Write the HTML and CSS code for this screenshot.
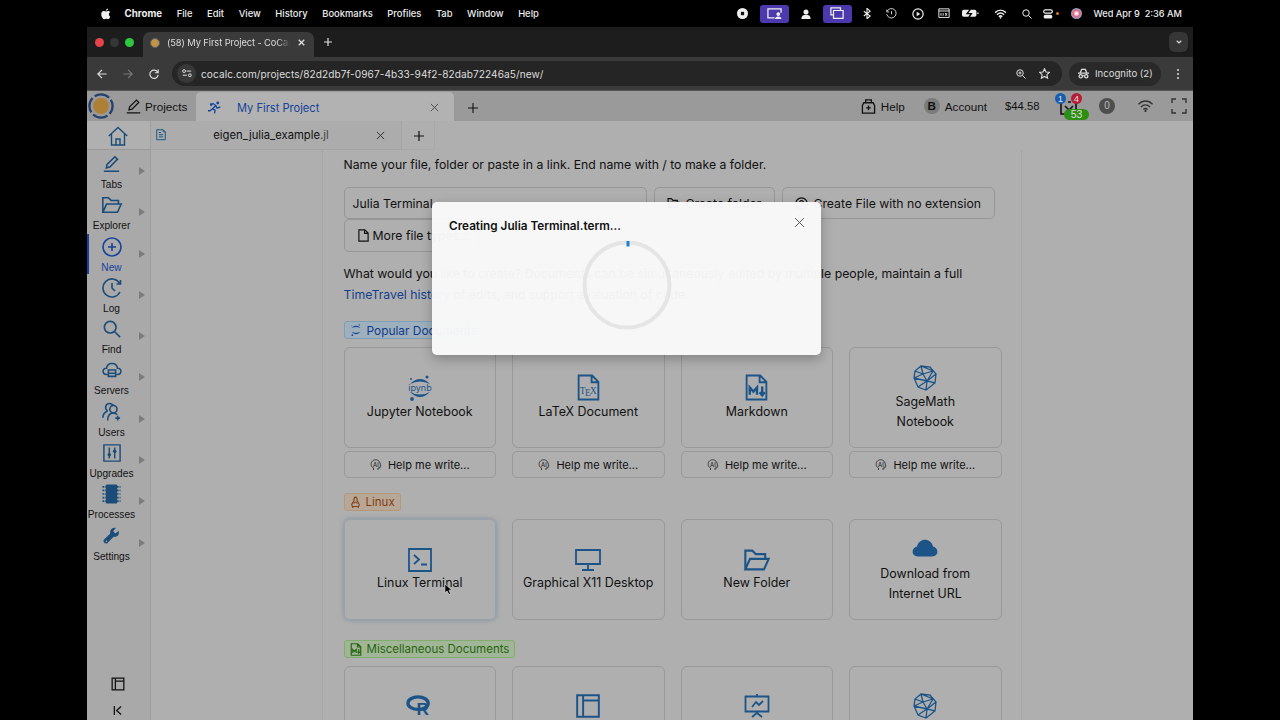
FILE: index.html
```html
<!DOCTYPE html>
<html lang="en">
  <head>
    <meta charset="utf-8" />
    <title>My First Project - CoCalc</title>
    <link rel="stylesheet" href="styles.css">
  </head>
  <body>
    <svg class="sprite">
      <symbol id="x" viewBox="0 0 10 10"><path d="M1 1l8 8M9 1l-8 8" /></symbol>
      <symbol id="plus" viewBox="0 0 10 10"><path d="M5 0v10M0 5h10" /></symbol>
      <symbol id="pencil" viewBox="0 0 20 20"><path d="M1 18.5h18M4 14.5l.8-4L14 1.500l3 3L8 13.500z" /></symbol>
      <symbol id="folder" viewBox="0 0 24 20"><path d="M2 18V2h6l3 3h8v4M2 18h16l4-9H6z" /></symbol>
      <symbol id="doc" viewBox="0 0 20 24"><path d="M1.500 1.500h11l6 6v15h-17zM12 2v6h6" /></symbol>
      <symbol id="md" viewBox="0 0 22 26"><path d="M1.500 1.500h13l6 6v17h-19zM14 2v6h6" /><path d="M4.500 20v-7l3.500 4 3.500-4v7M16.500 12v8M14 17.500l2.500 3 2.500-3" stroke-width="2.300" /></symbol>
      <symbol id="sage" viewBox="0 0 26 26"><path d="M9 1l9 1 6 7-1 9-9 7-8-3-4-9 1-7zM9 1l2 8-8-3M9 1l12 5-10 3M21 6l-6 10-4-7M24 9l-9 7 8 2M15 16l-1 9M15 16L6 22M11 9L2 13M2 13l13 3M18 2l3 4" /></symbol>
      <symbol id="layout" viewBox="0 0 24 24"><path d="M2 2h20v20H2zM7.500 2v20M7.500 7H22" /></symbol>
      <symbol id="jup" viewBox="0 0 26 26"><path class="fill" d="M3 9Q13-1 23 9Q13 4 3 9zM3 17Q13 27 23 17Q13 22 3 17z" /><circle class="fill" cx="20" cy="2" r="1.500" /><circle class="fill" cx="4" cy="4" r="1" /><circle class="fill" cx="5" cy="24" r="1.900" /></symbol>
      <symbol id="ai" viewBox="0 0 24 24"><path d="M7 22v-4C1 15 1 7 5 4c4-4 12-3 14 2 2 3 1 5 3 8l-2 1v3h-4v4" /></symbol>
      <symbol id="wifi" viewBox="0 0 24 18"><path d="M2 6.500C8 .5 16 .5 22 6.500M5.500 10.500c4-4 9-4 13 0M9 14c2-2 4-2 6 0" /><circle class="fill" cx="12" cy="16" r="1.600" /></symbol>
      <symbol id="search" viewBox="0 0 20 20"><circle cx="8" cy="8" r="6.500" /><path d="M13 13l6 6" /></symbol>
    </svg>

    <div class="screen">
      <header class="menubar">
        <svg class="apple" viewBox="0 0 20 24"><path d="M14 1c.2 2.500-1.800 4.500-4 4.600C9.800 3.300 11.800 1.200 14 1zM18.500 17.500c-1.500 3.500-3 5-4.700 5-1.400 0-2-.8-3.600-.8s-2.200.8-3.600.8C3.500 22.500.5 17 .5 12.500.5 8.500 3 6.200 5.800 6.200c1.600 0 3 1 4.200 1 1 0 2.600-1.100 4.600-1 1.600 0 2.900.8 3.700 2-3.600 2.200-3 7.600.2 9.300z" /></svg>
        <b>Chrome</b><span>File</span><span>Edit</span><span>View</span><span>History</span><span>Bookmarks</span><span>Profiles</span><span>Tab</span><span>Window</span><span>Help</span>
        <div class="status">
          <svg viewBox="0 0 12 12" width="11"><circle class="fill" cx="6" cy="6" r="6" /><rect x="3.500" y="3.500" width="5" height="5" rx="1" fill="#111" /></svg>
          <i class="purple"><svg viewBox="0 0 16 12" width="15"><path d="M8 10.500H1V1h14v4" /><circle class="fill" cx="12" cy="6.500" r="2" /><path class="fill" d="M8.500 12q0-3 3.500-3t3.500 3z" /></svg></i>
          <svg viewBox="0 0 12 12" width="10"><circle class="fill" cx="6" cy="3.500" r="3" /><path class="fill" d="M.5 12q0-5 5.500-5t5.500 5z" /></svg>
          <i class="purple"><svg viewBox="0 0 16 14" width="14"><path d="M4 9H1V1h11v3M4 4h11v9H4z" /></svg></i>
          <svg viewBox="0 0 10 14" width="8"><path d="M1 4l8 6-4 3.500V.5L9 4l-8 6" /></svg>
          <svg viewBox="0 0 14 14" width="11" stroke-width="1.100"><path d="M1.500 4A6 6 0 1 1 1 8M1 2v3h3M7 4v4" /></svg>
          <svg viewBox="0 0 14 14" width="12"><circle cx="7" cy="7" r="6" /><path class="fill" d="M5.500 4.500v5l4-2.500z" /></svg>
          <svg viewBox="0 0 14 12" width="12" stroke-width="1.100"><path d="M1 1h12v10H1zM1 3.500h12M3.500 6v3M6 6v3M8.500 6l2 3M10.500 6l-2 3" /></svg>
          <svg viewBox="0 0 20 10" width="17"><rect class="fill" x="0" y="1" width="17" height="8" rx="2" /><path class="fill" d="M18 4h1.500v2H18z" /><path d="M10 0L6 5.500h5L8 10" stroke="#000" stroke-width="1.600" /></svg>
          <svg width="13" height="10" viewBox="0 0 24 18" stroke-width="2.800"><use href="#wifi" /></svg>
          <svg width="10" height="10" stroke-width="2"><use href="#search" /></svg>
          <i class="control"><svg viewBox="0 0 12 12" width="10"><rect x=".8" y="1" width="10.400" height="4" rx="2" /><rect class="fill" x=".8" y="7" width="10.400" height="4.500" rx="2" /></svg><em></em></i>
          <i class="siri"></i>
        </div>
        <time>Wed Apr 9&nbsp; 2:36 AM</time>
      </header>

      <div class="tabstrip">
        <i class="light red"></i><i class="light dark"></i><i class="light green"></i>
        <div class="browser-tab">
          <i class="favicon"></i>
          <span class="tab-title">(58) My First Project - CoCalc</span>
          <svg class="tab-x" width="7" height="7" stroke-width="1.800"><use href="#x" /></svg>
        </div>
        <svg class="new-tab" width="8" height="8" stroke-width="1.500"><use href="#plus" /></svg>
        <i class="chevron"><svg viewBox="0 0 8 6" width="6"><path d="M1 1l3 3 3-3" stroke-width="1.500" /></svg></i>
      </div>

      <div class="toolbar">
        <svg viewBox="0 0 12 12" width="10"><path d="M11.500 6H1M6 1L1 6l5 5" /></svg>
        <svg class="dim" viewBox="0 0 12 12" width="10"><path d="M.5 6H11M6 1l5 5-5 5" /></svg>
        <svg viewBox="0 0 12 12" width="10"><path d="M10.500 4A5 5 0 1 0 11 7M11 .5v4H7" /></svg>
        <div class="address">
          <i class="tune"><svg viewBox="0 0 12 10" width="10" stroke-width="1.200"><circle cx="2.500" cy="2.500" r="1.700" /><path d="M5.500 2.500H11M1 7.500h5" /><circle cx="9.500" cy="7.500" r="1.700" /></svg></i>
          <span class="url">cocalc.com/projects/82d2db7f-0967-4b33-94f2-82dab72246a5/new/</span>
          <svg viewBox="0 0 20 20" width="10" stroke-width="2"><use href="#search" /><path d="M5 8h6M8 5v6" /></svg>
          <svg viewBox="0 0 12 12" width="11" stroke-width="1.200"><path d="M6 .8l1.600 3.500 3.800.4-2.800 2.600.8 3.800L6 9.200l-3.400 1.900.8-3.800L.6 4.700l3.800-.4z" /></svg>
        </div>
        <div class="incognito"><svg viewBox="0 0 12 12" width="11"><path d="M0 5.500h12M2.500 5L4 1.500h4L9.500 5" /><circle cx="3" cy="9" r="1.800" /><circle cx="9" cy="9" r="1.800" /><path d="M5 8.500h2" /></svg><span>Incognito (2)</span></div>
        <svg viewBox="0 0 4 12" width="4"><circle class="fill" cx="2" cy="2" r="1" /><circle class="fill" cx="2" cy="6" r="1" /><circle class="fill" cx="2" cy="10" r="1" /></svg>
      </div>

      <nav class="app-nav">
        <svg class="logo" viewBox="0 0 26 26" width="26"><circle cx="13" cy="13" r="8" fill="#ad8036" stroke="none" /><circle cx="13" cy="13" r="11.600" stroke="#26406f" stroke-width="2.300" stroke-dasharray="15.500 2.720" stroke-dashoffset="7" /></svg>
        <span class="projects"><svg width="15" height="15" stroke-width="1.700"><use href="#pencil" /></svg>Projects</span>
        <div class="project-tab">
          <svg class="runner" viewBox="0 0 20 20" width="13" stroke-width="2"><circle class="fill" cx="15" cy="3" r="2.200" /><path d="M3 5l5-1 4 3-5 5 4 2-1 5M7 12l-4 3H0M12 7l2 4 5-2M4 8l3-4" /></svg>
          <span>My First Project</span>
          <svg width="9" height="9" stroke-width="1"><use href="#x" /></svg>
        </div>
        <svg class="nav-plus" width="10" height="10" stroke-width="1.100"><use href="#plus" /></svg>
        <span class="help"><svg viewBox="0 0 16 16" width="15"><path d="M1.500 15V7L3 4h10l1.500 3v8zM5 4V1h6v3M8 7v5M5.500 9.500h5" /></svg>Help</span>
        <span class="account"><i>B</i>Account</span>
        <span class="balance">$44.58</span>
        <div class="inbox">
          <svg viewBox="0 0 18 14" width="18" stroke-width="1.600"><path d="M1 1v12h6M16 1v8M5 5l4 4 4-4M8 1h3" /></svg>
          <i class="badge blue">1</i><i class="badge crimson">4</i><i class="badge lime">53</i>
        </div>
        <i class="zero">0</i>
        <svg class="net" width="17" height="14" viewBox="0 0 24 18" stroke-width="1.900"><use href="#wifi" /></svg>
        <svg class="full" viewBox="0 0 16 16" width="16"><path d="M1 5V1h4M11 1h4v4M15 11v4h-4M5 15H1v-4" /></svg>
      </nav>

      <div class="app">
        <aside class="sidebar">
          <div class="home"><svg viewBox="0 0 20 20" width="20"><path d="M.8 10L10 1.500 19.200 10M3.500 8v11h13V8M8 19v-6h4v6" /></svg></div>
          <div class="item"><svg width="17" height="18" stroke-width="1.900"><use href="#pencil" /></svg>Tabs</div>
          <div class="item"><svg width="22" height="18" stroke-width="1.700"><use href="#folder" /></svg>Explorer</div>
          <div class="item active"><svg viewBox="0 0 20 20" width="20" stroke-width="1.600"><circle cx="10" cy="10" r="9" /><path d="M10 6v8M6 10h8" /></svg>New</div>
          <div class="item"><svg viewBox="0 0 20 20" width="20" stroke-width="1.600"><path d="M17.500 5A9 9 0 1 0 18 14M18.500 2v4h-4M10 5v5l3 3" /></svg>Log</div>
          <div class="item"><svg width="18" height="18" stroke-width="1.800"><use href="#search" /></svg>Find</div>
          <div class="item"><svg viewBox="0 0 22 18" width="20" stroke-width="1.700"><path d="M6 14H5C0 14 0 7 5 7c1-7 11-7 12 0 5 0 5 7 0 7h-1M7 9h8v7H7zM7 12.500h8" /></svg>Servers</div>
          <div class="item"><svg viewBox="0 0 20 20" width="19" stroke-width="1.700"><path d="M6 9C2 6 4 1 8 1c2 0 3 1 4 2M1 16c0-4 2-6 5-7" /><circle cx="12" cy="7" r="3.800" /><path d="M6 19c0-5 2-8 6-8 2 0 3 .5 4 2M16.500 14v5M14 16.500h5" /></svg>Users</div>
          <div class="item"><svg viewBox="0 0 20 20" width="18" stroke-width="1.600"><path d="M1 1h18v18H1zM7 4v12M13 4v12" /><circle class="fill" cx="7" cy="12" r="2" /><circle class="fill" cx="13" cy="8" r="2" /></svg>Upgrades</div>
          <div class="item"><svg viewBox="0 0 20 20" width="19"><rect class="fill" x="4" y="0" width="12" height="20" rx="1" /><path d="M.5 2.500h19M.5 6.250h19M.5 10h19M.5 13.750h19M.5 17.500h19" stroke-width="1.800" stroke-dasharray="2 1" /></svg>Processes</div>
          <div class="item"><svg viewBox="0 0 20 20" width="17"><path class="fill" d="M18.500 4l-4 3-2.500-2.500 3-4c-4-.8-7.500 2.500-6.500 6.500L1 14.500c-1.500 2.500 1.500 5.500 4 4L12.500 11c4 1 7.500-3 6-7zM4 15.200a.9.900 0 1 1-.1 0z" /></svg>Settings</div>
          <div class="side-bottom">
            <svg width="14" height="14" stroke-width="2.200"><use href="#layout" /></svg>
            <svg viewBox="0 0 10 10" width="9"><path d="M1.500 0v10M9 .5L4 5l5 4.500" /></svg>
          </div>
        </aside>

        <main>
          <div class="file-tabs">
            <div class="file-tab"><svg viewBox="0 0 14 16" width="10"><path d="M1 1h9l3 3v11H1zM4 5h3M4 8h6M4 11h6M10 1v3h3" /></svg><span>eigen_julia_example<em>.jl</em></span><svg class="close" width="9" height="9" stroke-width="1.100"><use href="#x" /></svg></div>
            <div class="file-plus"><svg width="10" height="10" stroke-width="1.200"><use href="#plus" /></svg></div>
          </div>

          <section class="page">
            <p class="intro">Name your file, folder or paste in a link. End name with / to make a folder.</p>
            <div class="actions">
              <div class="field name">Julia Terminal</div>
              <div class="field create"><svg width="13" height="12" stroke-width="2.200"><use href="#folder" /></svg>Create folder</div>
              <div class="field noext"><svg viewBox="0 0 16 16" width="13"><circle cx="8" cy="8" r="7" /><path d="M5.500 6q2.500-3 5 0Q10.500 8 8 8v4" /></svg>Create File with no extension</div>
              <div class="field more"><svg width="11" height="13" stroke-width="2.200"><use href="#doc" /></svg>More file types...</div>
            </div>
            <p class="what">What would you like to create? Documents can be simultaneously edited by multiple people, maintain a full<br><a>TimeTravel history</a> of edits, and support evaluation of code.</p>

            <div class="tag popular"><svg width="12" height="12"><use href="#jup" /></svg>Popular Documents</div>
            <div class="cards">
              <div class="card"><svg class="jupyter" viewBox="0 0 26 26" width="26"><use href="#jup" /><text x="13" y="15.500" font-size="9" text-anchor="middle">ipynb</text></svg>Jupyter Notebook</div>
              <div class="card"><svg viewBox="0 0 22 26" width="23" height="27"><path d="M1.500 1.500h13l6 6v17h-19zM14 2v6h6" /><text class="serif" x="2.500" y="19.500">T</text><text class="serif" x="7.600" y="21.500">E</text><text class="serif" x="12.500" y="19.500">X</text></svg>LaTeX Document</div>
              <div class="card"><svg width="23" height="27"><use href="#md" /></svg>Markdown</div>
              <div class="card"><svg class="thin" width="26" height="26"><use href="#sage" /></svg>SageMath<br>Notebook</div>
            </div>
            <div class="cards helpers">
              <div class="write"><svg viewBox="0 0 24 24" width="12"><use href="#ai" /><text x="12" y="16" font-size="12" text-anchor="middle">AI</text></svg>Help me write...</div>
              <div class="write"><svg viewBox="0 0 24 24" width="12"><use href="#ai" /><text x="12" y="16" font-size="12" text-anchor="middle">AI</text></svg>Help me write...</div>
              <div class="write"><svg viewBox="0 0 24 24" width="12"><use href="#ai" /><text x="12" y="16" font-size="12" text-anchor="middle">AI</text></svg>Help me write...</div>
              <div class="write"><svg viewBox="0 0 24 24" width="12"><use href="#ai" /><text x="12" y="16" font-size="12" text-anchor="middle">AI</text></svg>Help me write...</div>
            </div>

            <div class="tag linux"><svg viewBox="0 0 14 16" width="11" height="12"><path d="M5 6C4 0 10 0 9 6l3 5-1 4-2-1H5l-2 1-1-4zM4.500 10q2.500-4 5 0" /></svg>Linux</div>
            <div class="cards">
              <div class="card hover"><svg viewBox="0 0 24 24" width="24"><path d="M1 1h22v22H1zM6 7l5 4.500L6 16M13 16.500h6" /></svg>Linux Terminal</div>
              <div class="card"><svg viewBox="0 0 26 24" width="26"><path d="M1 2h24v14H1zM13 16v5M7 22h12" /></svg>Graphical X11 Desktop</div>
              <div class="card"><svg width="28" height="24"><use href="#folder" /></svg>New Folder</div>
              <div class="card cloud"><svg viewBox="0 0 26 18" width="26"><path class="fill" d="M6 17.500C-1 17.500-1 9 5 7.500 7-1.500 19-1.500 21 7.500c6 1.500 6 10-1 10z" /></svg>Download from<br>Internet URL</div>
            </div>

            <div class="tag misc"><svg width="12" height="13" stroke-width="2.400"><use href="#md" /></svg>Miscellaneous Documents</div>
            <div class="cards">
              <div class="card"><svg class="rlogo" viewBox="0 0 28 22" width="27"><ellipse cx="12.500" cy="8.500" rx="10.500" ry="6.500" /><text class="r" x="11" y="20.500">R</text></svg></div>
              <div class="card"><svg width="26" height="26"><use href="#layout" /></svg></div>
              <div class="card"><svg viewBox="0 0 26 26" width="26"><path d="M1.500 3.500h23v15h-23zM13 1v2M8 14l4-5 3 3 4-4M8 24l5-4 5 4" /></svg></div>
              <div class="card"><svg class="thin" width="26" height="26"><use href="#sage" /></svg></div>
            </div>
          </section>
        </main>
      </div>

      <div class="modal">
        <h4>Creating Julia Terminal.term...</h4>
        <svg class="modal-x" width="11" height="11" stroke-width=".9"><use href="#x" /></svg>
        <svg class="spinner" viewBox="0 0 90 90" width="90"><circle cx="45" cy="45" r="42.500" /><path d="M46 1v5.500" /></svg>
      </div>
      <svg class="cursor" viewBox="0 0 10 14" width="8"><path d="M1 1v10l2.500-2 2 4 2-1-2-4H9z" /></svg>
    </div>
  </body>
</html>
```
FILE: styles.css
```css
* {
  box-sizing: border-box;
}
body {
  margin: 0;
  background: #000;
  font-family: Inter, "Liberation Sans", sans-serif;
  font-size: 12.6px;
  color: #111;
}
p, h4 {
  margin: 0;
}
i, em {
  font-style: normal;
}
svg {
  flex: none;
  fill: none;
  stroke: currentColor;
}
.fill {
  fill: currentColor;
  stroke: none;
}
text {
  fill: currentColor;
  stroke: none;
}
.sprite {
  position: absolute;
  width: 0;
  height: 0;
}
.screen {
  position: relative;
  width: 1106px;
  height: 720px;
  margin: 0 auto;
  overflow: hidden;
  display: flex;
  flex-direction: column;
  white-space: nowrap;
  stroke-width: 1.4;
}

/* mac menu bar */
.menubar {
  display: flex;
  align-items: center;
  height: 27px;
  flex: none;
  padding: 0 11px 0 14px;
  gap: 14.6px;
  color: #eee;
  font-size: 9.4px;
  font-weight: 500;
}
.menubar b {
  font-size: 9.7px;
}
.menubar time {
  font-size: 9.2px;
}
.apple {
  width: 10px;
  height: 12px;
  margin-right: -1px;
  fill: #eee;
  stroke: none;
}
.status {
  display: grid;
  grid-template-columns: 28px 35px 28px 35px 24px 26px 27px 25px 28px 32px 20px 29px 21px;
  align-items: center;
  justify-items: center;
  margin-left: auto;
  margin-right: -8px;
}
.purple {
  display: flex;
  align-items: center;
  justify-content: center;
  width: 29px;
  height: 18px;
  border-radius: 3px;
  background: #4d39ae;
}
.control {
  display: flex;
  align-items: center;
  gap: 3px;
}
.control em {
  width: 3px;
  height: 3px;
  border-radius: 50%;
  background: #d07b2c;
}
.siri {
  width: 11px;
  height: 11px;
  border-radius: 50%;
  background: radial-gradient(circle, #fff 10%, #e4667b 40%, #84aee0 75%);
}

/* browser chrome */
.tabstrip {
  display: flex;
  align-items: center;
  height: 30px;
  flex: none;
  padding: 0 5px 0 8px;
  background: #1d1d1d;
  color: #ddd;
}
.light {
  width: 9px;
  height: 9px;
  margin-right: 6px;
  border-radius: 50%;
}
.red { background: #e4434a; }
.dark { background: #363636; }
.green { background: #2dc840; }
.browser-tab {
  display: flex;
  align-items: center;
  align-self: flex-end;
  width: 171px;
  height: 25px;
  margin-left: 3px;
  padding: 0 9px 4px 7px;
  border-radius: 7px 7px 0 0;
  background: #3a3a3a;
  font-size: 9.3px;
}
.favicon {
  width: 10px;
  height: 10px;
  border: 1px solid #536078;
  border-radius: 50%;
  background: #c09441;
}
.tab-title {
  width: 123px;
  margin-left: 7px;
  overflow: hidden;
  letter-spacing: -0.09px;
  mask-image: linear-gradient(90deg, #000 90%, transparent);
}
.tab-x {
  margin-left: auto;
}
.new-tab {
  margin-left: 10px;
}
.chevron {
  display: flex;
  align-items: center;
  justify-content: center;
  width: 19px;
  height: 20px;
  margin-left: auto;
  border-radius: 6px;
  background: #363636;
}
.toolbar {
  display: flex;
  align-items: center;
  height: 34px;
  flex: none;
  padding: 0 13px 0 10px;
  gap: 16px;
  border-bottom: 1px solid #555;
  background: #3a3a3a;
  color: #ddd;
  font-size: 10.1px;
}
.toolbar .dim {
  color: #777;
}
.address {
  display: flex;
  align-items: center;
  flex: 1;
  height: 25px;
  margin-left: -3px;
  margin-right: -9px;
  padding: 0 12px 0 5px;
  gap: 13px;
  border-radius: 13px;
  background: #252525;
}
.tune {
  display: flex;
  align-items: center;
  justify-content: center;
  width: 19px;
  height: 19px;
  margin-right: -8px;
  border-radius: 50%;
  background: #383838;
}
.url {
  margin-right: auto;
  letter-spacing: 0.07px;
}
.incognito {
  display: flex;
  align-items: center;
  width: 92px;
  height: 24px;
  padding-left: 9px;
  gap: 6px;
  margin-right: -1px;
  border-radius: 12px;
  background: #292929;
  font-size: 9.6px;
}

/* app top bar */
.app-nav {
  display: flex;
  align-items: center;
  height: 30px;
  flex: none;
  padding-left: 1px;
  background: #9a9a9a;
  font-family: "Liberation Sans", sans-serif;
  font-size: 11.7px;
}
.projects {
  display: flex;
  align-items: center;
  gap: 4px;
  width: 82px;
  padding-left: 12px;
}
.project-tab {
  display: flex;
  align-items: center;
  width: 258px;
  height: 29px;
  align-self: flex-end;
  padding: 2px 15px 0 12px;
  border-radius: 5px 5px 0 0;
  background: #b2b2b2;
  color: #14439a;
  font-family: Inter, sans-serif;
  font-size: 11.1px;
}
.project-tab span {
  margin-left: 16px;
  margin-right: auto;
}
.project-tab svg:last-child {
  color: #444;
}
.nav-plus {
  margin: 3px 0 0 14px;
}
.help, .account {
  display: flex;
  align-items: center;
  gap: 5px;
}
.help {
  margin-left: auto;
  margin-right: 19px;
}
.account i {
  width: 16px;
  height: 16px;
  border-radius: 50%;
  background: #7b7b7b;
  font-weight: bold;
  line-height: 16px;
  text-align: center;
}
.balance {
  width: 36px;
  margin-left: 18px;
  font-size: 11.3px;
}
.inbox {
  position: relative;
  width: 34px;
  height: 28px;
  margin-left: 15px;
}
.inbox svg {
  margin: 9px 0 0 4px;
}
.badge {
  position: absolute;
  min-width: 11px;
  height: 11px;
  border-radius: 6px;
  color: #ddd;
  font-size: 9.5px;
  line-height: 11px;
  text-align: center;
}
.blue { left: -1px; top: 1px; background: #165eae; }
.crimson { left: 15px; top: 1px; background: #b51f36; }
.lime { left: 8px; top: 17px; width: 25px; background: #2c8f11; font-size: 10.5px; }
.zero {
  width: 16px;
  height: 16px;
  margin-left: 9px;
  border-radius: 50%;
  background: #4e4e4e;
  color: #bbb;
  font-size: 10px;
  line-height: 16px;
  text-align: center;
}
.net {
  margin-left: 22px;
  color: #333;
}
.full {
  margin: 0 6px 0 17px;
  color: #333;
}

/* sidebar */
.app {
  display: flex;
  flex: 1;
  min-height: 0;
}
.sidebar {
  display: flex;
  flex-direction: column;
  width: 64px;
  border-right: 1px solid #9e9e9e;
  background: #a9a9a9;
  font-family: "Liberation Sans", sans-serif;
  font-size: 10.15px;
}
.home {
  display: flex;
  align-items: flex-end;
  height: 29px;
  flex: none;
  padding: 0 0 3px 21px;
  border-bottom: 1px solid #999;
  background: #b0b0b0;
  color: #1c4c78;
}
.item {
  position: relative;
  display: flex;
  flex-direction: column;
  align-items: center;
  height: 41.3px;
  flex: none;
  width: 64px;
  padding: 4px 15px 0 0;
  line-height: 12px;
}
.item svg {
  height: 20px;
  margin-bottom: 5px;
  color: #1c4c78;
}
.item::after {
  content: "";
  position: absolute;
  right: 6px;
  top: 17px;
  border: solid transparent;
  border-width: 4px 0 4px 6px;
  border-left-color: #7c7c7c;
}
.item.active, .item.active svg {
  color: #14429b;
}
.active::before {
  content: "";
  position: absolute;
  left: 0;
  top: 1px;
  width: 2px;
  height: 40px;
  background: #14429b;
}
.side-bottom {
  display: flex;
  flex-direction: column;
  align-items: center;
  gap: 15px;
  margin-top: auto;
  padding: 0 2px 5px 0;
}

/* files */
main {
  display: flex;
  flex-direction: column;
  flex: 1;
  background: #afafaf;
}
.file-tabs {
  display: flex;
  height: 29px;
  flex: none;
}
.file-tab {
  display: flex;
  align-items: center;
  width: 251px;
  padding: 0 16px 0 5px;
  border-right: 1px solid #a4a4a4;
  border-bottom: 1px solid #a4a4a4;
  background: #acacac;
  font-size: 11.25px;
}
.file-tab svg {
  color: #1c5a82;
}
.file-tab span {
  margin: 0 auto;
}
.file-tab em {
  color: #444;
}
.file-tab .close {
  color: #333;
}
.file-plus {
  display: flex;
  align-items: center;
  justify-content: center;
  width: 33px;
  padding: 2px 0 0 1px;
  border: solid #a8a8a8;
  border-width: 0 1px 1px 0;
}
.page {
  width: 700px;
  margin: 0 auto;
  flex: 1;
  padding: 6px 19px 0 21px;
  border: solid #a5a5a5;
  border-width: 0 1px;
  position: relative;
  left: -0.5px;
}
.intro {
  line-height: 17px;
  font-size: 12.25px;
}
.actions {
  display: flex;
  flex-wrap: wrap;
  gap: 0 7px;
  margin-top: 14px;
}
.field {
  display: flex;
  align-items: center;
  height: 33px;
  padding: 0 8px;
  gap: 4px;
  border: 1px solid #969696;
  border-radius: 5px;
  font-size: 12.25px;
}
.name { width: 303px; height: 32px; }
.create { width: 121px; height: 32px; padding-left: 12px; gap: 6px; }
.noext { width: 213px; height: 32px; padding-left: 12px; gap: 6px; }
.more { width: 136px; padding-left: 13px; }
.what {
  margin-top: 12px;
  line-height: 20.5px;
  font-size: 12.3px;
}
.what a {
  color: #143f8c;
}
.tag {
  display: flex;
  align-items: center;
  width: max-content;
  height: 18px;
  padding: 0 5px 0 5px;
  gap: 5px;
  border: 1px solid;
  border-radius: 3px;
  font-size: 11.5px;
}
.popular {
  margin-top: 16px;
  border-color: #7f9eb5;
  background: #9eb0bd;
  color: #113b8b;
  font-size: 11.9px;
}
.linux {
  margin-top: 15px;
  border-color: #b5987a;
  background: #b6a797;
  color: #823c10;
}
.misc {
  margin-top: 20px;
  border-color: #7fae6c;
  background: #a1b697;
  color: #27640f;
}
.cards {
  display: grid;
  grid-template-columns: repeat(4, 1fr);
  gap: 16px;
  margin-top: 8px;
}
.card {
  display: flex;
  flex-direction: column;
  align-items: center;
  justify-content: center;
  height: 101px;
  padding-top: 1px;
  border: 1px solid #999;
  border-radius: 6px;
  font-size: 12.45px;
  line-height: 19.5px;
  text-align: center;
}
.card svg {
  margin-bottom: 1px;
  color: #1d5488;
  stroke-width: 1.8;
}
.card .thin {
  stroke-width: 1.3;
}
.card .rlogo {
  stroke-width: 3.4;
}
.cards:last-child .card {
  padding-bottom: 22px;
}
.card.cloud svg {
  margin: 2px 0 7px;
}
.card.hover {
  border-color: #97a2ac;
  box-shadow: 0 0 5px #7d8e9c;
}
.serif {
  font: 9px "Liberation Serif", serif;
}
.r {
  font: bold 18px "Liberation Sans", sans-serif;
}
.helpers {
  margin-top: 3px;
}
.write {
  display: flex;
  align-items: center;
  justify-content: center;
  height: 27px;
  gap: 6px;
  border: 1px solid #999;
  border-radius: 5px;
  font-size: 11px;
}

/* progress dialog over the page */
.modal {
  position: absolute;
  left: 345px;
  top: 202px;
  width: 389px;
  height: 153px;
  padding: 16px 17px;
  border-radius: 5px;
  background: rgba(249, 249, 249, 0.97);
  box-shadow: 0 4px 12px rgba(0, 0, 0, 0.25);
}
.modal h4 {
  font-size: 11.75px;
  font-weight: 600;
  line-height: 16px;
}
.modal-x {
  position: absolute;
  right: 16px;
  top: 15px;
  color: #555;
}
.spinner {
  display: block;
  margin: 6px auto 0;
}
.spinner circle {
  stroke: #e5e5e5;
  stroke-width: 4;
}
.spinner path {
  stroke: #1b80d6;
  stroke-width: 3;
}
.cursor {
  position: absolute;
  left: 357px;
  top: 583px;
  width: 9px;
  fill: #000;
  stroke: #ddd;
  stroke-width: 0.8;
}
```
